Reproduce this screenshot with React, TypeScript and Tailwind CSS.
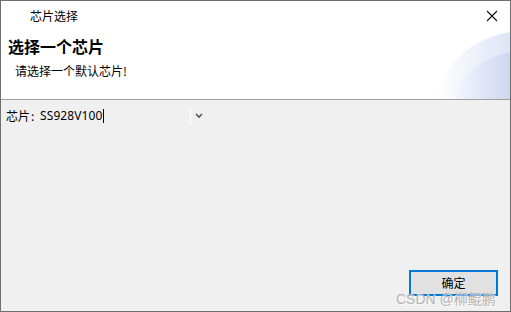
import React from "react";

const font = { fontFamily: '"Noto Sans CJK SC", "Noto Sans", sans-serif' };

export default function App() {
  return (
    <div
      className="relative w-[511px] h-[312px] border border-[#6f6f6f] bg-[#f0f0f0] flex flex-col overflow-hidden text-black"
      style={font}
    >
      <div className="relative bg-white h-[98px] flex flex-col shrink-0">
        <div className="h-[29px] flex items-center pl-[29px] pr-[10px] text-[12px] leading-none">
          <span className="flex-1">芯片选择</span>
          <svg width="12" height="12" viewBox="0 0 12 12" className="mr-[2px]">
            <path d="M1 1 L11 11 M11 1 L1 11" stroke="#111" strokeWidth="1.1" fill="none" />
          </svg>
        </div>
        <div className="pl-[7px] mt-[6px] text-[16px] font-bold leading-[20px]">选择一个芯片</div>
        <div className="pl-[14px] mt-[7px] text-[12px] leading-[16px]">请选择一个默认芯片!</div>
        <svg
          className="absolute right-0 bottom-0"
          width="77"
          height="68"
          viewBox="0 0 77 68"
        >
          <defs>
            <linearGradient id="g1" x1="0" y1="0" x2="1" y2="0">
              <stop offset="0" stopColor="#ffffff" />
              <stop offset="1" stopColor="#dfe5f6" />
            </linearGradient>
            <linearGradient id="g2" x1="0" y1="0" x2="1" y2="0">
              <stop offset="0" stopColor="#f4f6fc" />
              <stop offset="1" stopColor="#cdd7f1" />
            </linearGradient>
          </defs>
          <path d="M2 68 Q18 12 77 1 L77 68 Z" fill="url(#g1)" />
          <path d="M22 68 Q32 30 77 21 L77 68 Z" fill="url(#g2)" />
        </svg>
      </div>
      <div className="h-px bg-[#a0a0a0] shrink-0" />
      <div className="flex items-center h-[32px] pl-[5px] text-[12px] leading-none whitespace-nowrap">
        <div className="w-[34px] min-w-[34px] shrink-0 flex">
          <span>芯片</span>
          <span className="ml-[1px]">:</span>
        </div>
        <span
          style={{ fontFamily: '"Noto Sans", "Liberation Sans", sans-serif' }}
          className="tracking-[0.1px]"
        >
          SS928V100
        </span>
        <span className="w-px h-[14px] bg-black ml-[1px]" />
        <div className="w-[86px]" />
        <span className="w-px h-[17px] bg-white" />
        <svg width="8" height="6" viewBox="0 0 8 6" className="ml-[4px]">
          <path d="M1 1 L4 4 L7 1" stroke="#555" strokeWidth="1.6" fill="none" />
        </svg>
      </div>
      <div className="flex-1" />
      <div className="flex justify-end pr-[12px] pb-[15px]">
        <button className="w-[89px] h-[26px] border-2 border-[#0078d7] bg-[#e1e1e1] text-[12px] leading-none">
          确定
        </button>
      </div>
      <div
        className="absolute left-[395px] top-[291px] text-[14px] text-[#b4b4b4] leading-none pointer-events-none"
        style={{
          fontFamily: '"Liberation Sans", "Noto Sans CJK SC", sans-serif',
          textShadow: "1px 1px 0 rgba(255,255,255,0.7)",
        }}
      >
        CSDN @柳鲲鹏
      </div>
    </div>
  );
}
